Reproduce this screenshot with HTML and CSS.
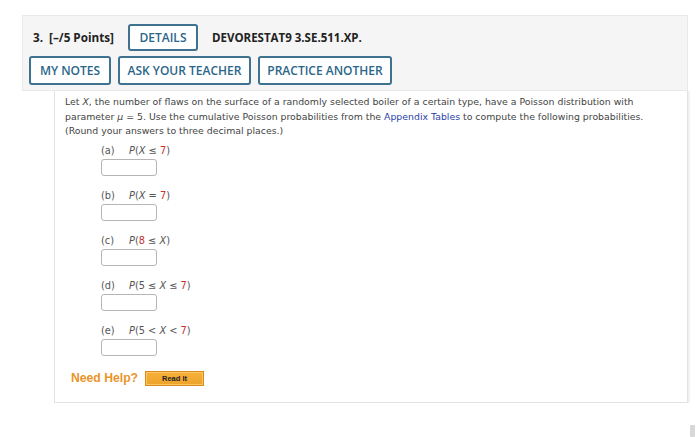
FILE: index.html
```html
<!DOCTYPE html>
<html>
<head>
<meta charset="utf-8">
<link rel="stylesheet" href="styles.css">
</head>
<body>
<div class="question">
  <div class="header">
    <div class="row row1">
      <span class="title">3.&nbsp; [–/5 Points]</span>
      <span class="btn">DETAILS</span>
      <span class="code">DEVORESTAT9 3.SE.511.XP.</span>
    </div>
    <div class="row row2">
      <span class="btn">MY NOTES</span>
      <span class="btn">ASK YOUR TEACHER</span>
      <span class="btn">PRACTICE ANOTHER</span>
    </div>
  </div>
  <div class="content">
    <p class="intro">Let <i>X</i>, the number of flaws on the surface of a randomly selected boiler of a certain type, have a Poisson distribution with parameter <i>μ</i> = 5. Use the cumulative Poisson probabilities from the <span class="link">Appendix Tables</span> to compute the following probabilities. (Round your answers to three decimal places.)</p>
    <div class="part">
      <div class="label"><span class="letter">(a)</span><span class="expr"><i>P</i>(<i>X</i> ≤ <span class="red">7</span>)</span></div>
      <div class="input"></div>
    </div>
    <div class="part">
      <div class="label"><span class="letter">(b)</span><span class="expr"><i>P</i>(<i>X</i> = <span class="red">7</span>)</span></div>
      <div class="input"></div>
    </div>
    <div class="part">
      <div class="label"><span class="letter">(c)</span><span class="expr"><i>P</i>(<span class="red">8</span> ≤ <i>X</i>)</span></div>
      <div class="input"></div>
    </div>
    <div class="part">
      <div class="label"><span class="letter">(d)</span><span class="expr"><i>P</i>(5 ≤ <i>X</i> ≤ <span class="red">7</span>)</span></div>
      <div class="input"></div>
    </div>
    <div class="part">
      <div class="label"><span class="letter">(e)</span><span class="expr"><i>P</i>(5 &lt; <i>X</i> &lt; <span class="red">7</span>)</span></div>
      <div class="input"></div>
    </div>
    <div class="help">
      <span class="need">Need Help?</span>
      <span class="readit">Read It</span>
    </div>
  </div>
</div>
<div class="scrollthumb"></div>
</body>
</html>
```
FILE: styles.css
```css
html, body {
  margin: 0;
  padding: 0;
  background: #ffffff;
}
body {
  font-family: "Open Sans", "DejaVu Sans", sans-serif;
  width: 700px;
  height: 437px;
  overflow: hidden;
  position: relative;
}
.question {
  margin: 15px 12px 0 22px;
  width: 666px;
}
.header {
  background: #f5f5f5;
  border: 1px solid #e9e9e9;
  padding: 6px 6px 5px 6px;
  box-sizing: border-box;
  height: 76px;
}
.row {
  display: flex;
  align-items: center;
}
.row1 {
  height: 28px;
  margin-top: 1px;
}
.row2 {
  margin-top: 5px;
  gap: 7px;
  height: 29px;
}
.title {
  font-weight: 700;
  font-size: 11.7px;
  color: #222;
  margin-left: 4px;
  width: 95px;
}
.btn {
  display: inline-flex;
  align-items: center;
  justify-content: center;
  box-sizing: border-box;
  height: 100%;
  border: 2px solid #3f7190;
  border-radius: 3px;
  background: #fff;
  color: #2a668a;
  font-weight: 600;
  font-size: 12px;
  padding: 0;
}
.row1 .btn {
  width: 70px;
  height: 27px;
}
.row2 .btn:nth-child(1) { width: 82px; }
.row2 .btn:nth-child(2) { width: 133px; }
.row2 .btn:nth-child(3) { width: 134px; }
.code {
  font-weight: 700;
  font-size: 11.5px;
  color: #222;
  margin-left: 14px;
}
.content {
  margin-left: 32px;
  border: 1px solid #e3e3e3;
  border-top: none;
  box-shadow: 2px 0 0 #f2f2f2;
  height: 312px;
  box-sizing: border-box;
  padding: 4px 10px 0 10px;
  font-family: "DejaVu Sans", Verdana, sans-serif;
  font-size: 9.35px;
  color: #444;
}
.intro {
  margin: 0;
  line-height: 14.6px;
}
.link {
  color: #2b3fa8;
}
.red {
  color: #c8302c;
}
.part {
  margin-left: 36px;
  margin-top: 6px;
  height: 39px;
}
.label {
  display: flex;
  height: 12px;
  line-height: 12px;
  color: #555;
  font-size: 9.8px;
}
.letter {
  width: 28px;
}
.input {
  width: 56px;
  height: 17px;
  margin-top: 2px;
  box-sizing: border-box;
  border: 1px solid #b5b5b5;
  border-radius: 3px;
  background: #fff;
}
.help {
  display: flex;
  align-items: center;
  margin-left: 6px;
  margin-top: 7px;
  gap: 7px;
}
.need {
  font-family: "Liberation Sans", Arial, sans-serif;
  font-weight: 700;
  font-size: 12.2px;
  color: #e8952a;
}
.readit {
  display: inline-flex;
  align-items: center;
  justify-content: center;
  width: 59px;
  height: 15px;
  box-sizing: border-box;
  background: linear-gradient(#f7b13c, #eea22a);
  border: 1px solid #d98a1c;
  box-shadow: inset 0 0 0 1px #fbc560;
  font-family: "Liberation Sans", Arial, sans-serif;
  font-weight: 700;
  font-size: 7.5px;
  color: #222;
}
.scrollthumb {
  position: absolute;
  left: 690px;
  top: 425px;
  width: 5px;
  height: 12px;
  background: #d8d8d8;
  border-radius: 1px;
}
```
